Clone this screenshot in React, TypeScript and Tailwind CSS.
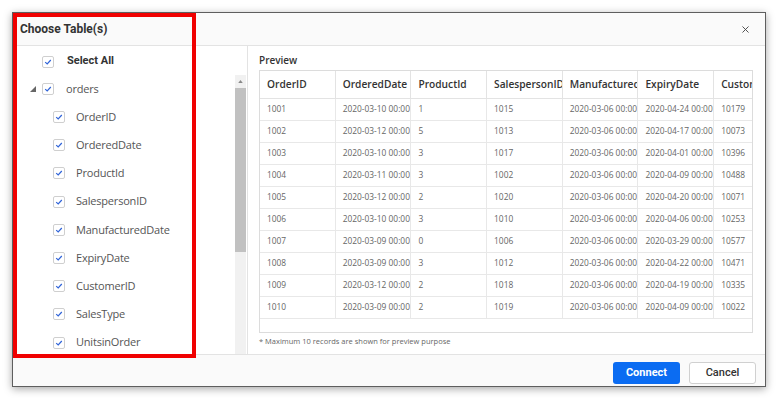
import { X } from 'lucide-react'

const fields = [
  'OrderID',
  'OrderedDate',
  'ProductId',
  'SalespersonID',
  'ManufacturedDate',
  'ExpiryDate',
  'CustomerID',
  'SalesType',
  'UnitsinOrder',
]

const columns = ['OrderID', 'OrderedDate', 'ProductId', 'SalespersonID', 'ManufacturedDate', 'ExpiryDate', 'CustomerID']

const rows = [
  ['1001', '2020-03-10 00:00', '1', '1015', '2020-03-06 00:00', '2020-04-24 00:00', '10179'],
  ['1002', '2020-03-12 00:00', '5', '1013', '2020-03-06 00:00', '2020-04-17 00:00', '10073'],
  ['1003', '2020-03-10 00:00', '3', '1017', '2020-03-06 00:00', '2020-04-01 00:00', '10396'],
  ['1004', '2020-03-11 00:00', '3', '1002', '2020-03-06 00:00', '2020-04-09 00:00', '10488'],
  ['1005', '2020-03-12 00:00', '2', '1020', '2020-03-06 00:00', '2020-04-20 00:00', '10071'],
  ['1006', '2020-03-10 00:00', '3', '1010', '2020-03-06 00:00', '2020-04-06 00:00', '10253'],
  ['1007', '2020-03-09 00:00', '0', '1006', '2020-03-06 00:00', '2020-03-29 00:00', '10577'],
  ['1008', '2020-03-09 00:00', '3', '1012', '2020-03-06 00:00', '2020-04-22 00:00', '10471'],
  ['1009', '2020-03-12 00:00', '2', '1018', '2020-03-06 00:00', '2020-04-19 00:00', '10335'],
  ['1010', '2020-03-09 00:00', '2', '1019', '2020-03-06 00:00', '2020-04-09 00:00', '10022'],
]

function Check() {
  return (
    <span className="flex h-[12px] w-[12px] shrink-0 items-center justify-center rounded-[2px] border border-[#cfcfcf] bg-white">
      <svg viewBox="0 0 10 10" className="h-[8px] w-[8px]">
        <path d="M1.5 5.2 L4 7.5 L8.5 2.5" fill="none" stroke="#2f63d8" strokeWidth="1.5" />
      </svg>
    </span>
  )
}

export default function App() {
  return (
    <div className="relative h-[398px] w-[777px] overflow-hidden bg-white font-['Open_Sans',sans-serif]">
      <div className="ml-[12px] mt-[12px] flex h-[375px] w-[754px] flex-col border border-[#5e5e5e] bg-white shadow-[0_2px_8px_rgba(0,0,0,0.35)]">
        {/* header */}
        <div className="flex h-[33px] shrink-0 items-center justify-between border-b border-[#e3e3e3] bg-[#fafafa] pl-[7px] pr-[14px]">
          <span className="font-['Roboto',sans-serif] text-[12px] font-bold text-[#333]">Choose Table(s)</span>
          <X className="h-[11px] w-[11px] text-[#444]" strokeWidth={2} />
        </div>

        {/* body */}
        <div className="flex min-h-0 flex-1">
          <div className="flex w-[235px] shrink-0 flex-col border-r border-[#e3e3e3] pt-[8px]">
            <div className="flex h-[15px] items-center gap-[13px] pl-[29px]">
              <Check />
              <span className="font-['Roboto',sans-serif] text-[11px] font-bold text-[#333]">Select All</span>
            </div>
            <div className="mt-[6px] flex min-h-0 flex-1">
              <div className="flex-1 overflow-hidden">
                <div className="flex h-[28px] items-center pl-[17px]">
                  <svg viewBox="0 0 6 6" className="mr-[6px] h-[6px] w-[6px]">
                    <path d="M6 0 L6 6 L0 6 Z" fill="#666" />
                  </svg>
                  <Check />
                  <span className="ml-[12px] text-[11px] tracking-[-0.2px] text-[#555]">orders</span>
                </div>
                {fields.map((f) => (
                  <div key={f} className="flex h-[28.2px] items-center gap-[11px] pl-[40px]">
                    <Check />
                    <span className="text-[11px] tracking-[-0.2px] text-[#555]">{f}</span>
                  </div>
                ))}
              </div>
              <div className="mr-[1px] flex w-[11px] shrink-0 flex-col bg-[#f1f1f1]">
                <div className="flex h-[13px] items-center justify-center">
                  <svg viewBox="0 0 6 4" className="h-[3px] w-[5px]">
                    <path d="M0 4 L3 0 L6 4 Z" fill="#888" />
                  </svg>
                </div>
                <div className="h-[164px] bg-[#c1c1c1]" />
              </div>
            </div>
          </div>

          <div className="flex min-w-0 flex-1 flex-col pl-[11px] pr-[12px] pt-[7px]">
            <span className="text-[10px] font-semibold leading-[14px] text-[#333]">Preview</span>
            <div className="mt-[3px] h-[263px] w-[494px] overflow-hidden border border-[#dcdcdc]">
              <div className="flex h-[28px] border-b border-[#e3e3e3]">
                {columns.map((c) => (
                  <div
                    key={c}
                    className="flex w-[75.7px] shrink-0 items-center overflow-hidden whitespace-nowrap border-r border-[#e3e3e3] pl-[7px] text-[10.2px] font-semibold text-[#333]"
                  >
                    {c}
                  </div>
                ))}
              </div>
              {rows.map((r) => (
                <div key={r[0]} className="flex h-[22px] border-b border-[#e8e8e8]">
                  {r.map((v, i) => (
                    <div
                      key={i}
                      className="flex w-[75.7px] shrink-0 items-center overflow-hidden whitespace-nowrap border-r border-[#e8e8e8] pl-[7px] text-[8.4px] text-[#666]"
                    >
                      {v}
                    </div>
                  ))}
                </div>
              ))}
            </div>
            <span className="mt-[3px] text-[7.5px] text-[#666]">* Maximum 10 records are shown for preview purpose</span>
          </div>
        </div>

        {/* footer */}
        <div className="flex h-[32px] shrink-0 items-start justify-end gap-[9px] border-t border-[#e3e3e3] bg-[#fafafa] pr-[9px] pt-[7px]">
          <button className="h-[22px] w-[67px] rounded-[3px] bg-[#0b6cf2] font-['Roboto',sans-serif] text-[11px] font-bold text-white">
            Connect
          </button>
          <button className="h-[22px] w-[67px] rounded-[3px] border border-[#d0d0d0] bg-white font-['Roboto',sans-serif] text-[11px] font-medium text-[#333]">
            Cancel
          </button>
        </div>
      </div>

      {/* red annotation box */}
      <div className="absolute left-[13px] top-[13px] h-[345px] w-[183px] border-[4px] border-[#f00000]" />
    </div>
  )
}
